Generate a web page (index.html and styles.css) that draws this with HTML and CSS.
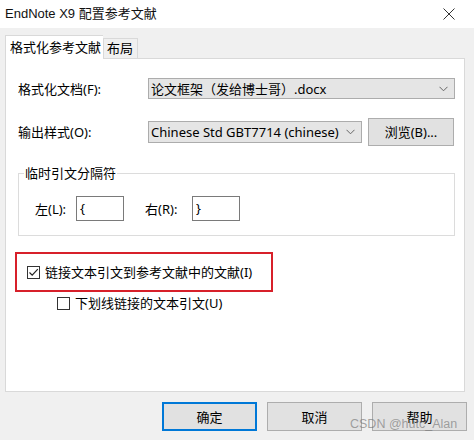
FILE: index.html
```html
<!DOCTYPE html>
<html lang="zh-CN">
<head>
<meta charset="utf-8">
<title>EndNote X9 配置参考文献</title>
<link rel="stylesheet" href="styles.css">
</head>
<body>
<div class="window">
  <div class="titlebar">
    <span class="title">EndNote X9 配置参考文献</span>
    <svg class="close" width="12" height="12" viewBox="0 0 12 12"><path d="M0.5 0.5 L11.5 11.5 M11.5 0.5 L0.5 11.5" stroke="#333" stroke-width="1" fill="none"/></svg>
  </div>
  <div class="tabs">
    <div class="tab active">格式化参考文献</div>
    <div class="tab">布局</div>
  </div>
  <div class="panel">
    <div class="row row1">
      <span class="label">格式化文档(F):</span>
      <div class="select wide">
        <span class="sel-text">论文框架（发给博士哥）.docx</span>
        <svg class="chev" width="9" height="6" viewBox="0 0 9 6"><path d="M0.5 0.8 L4.5 4.8 L8.5 0.8" stroke="#666" stroke-width="1" fill="none"/></svg>
      </div>
    </div>
    <div class="row row2">
      <span class="label">输出样式(O):</span>
      <div class="select narrow">
        <span class="sel-text">Chinese Std GBT7714 (chinese)</span>
        <svg class="chev" width="9" height="6" viewBox="0 0 9 6"><path d="M0.5 0.8 L4.5 4.8 L8.5 0.8" stroke="#666" stroke-width="1" fill="none"/></svg>
      </div>
      <div class="btn browse">浏览(B)...</div>
    </div>
    <fieldset class="group">
      <legend>临时引文分隔符</legend>
      <div class="sep-row">
        <span class="sep-label l">左(L):</span>
        <div class="field">{</div>
        <span class="sep-label r">右(R):</span>
        <div class="field">}</div>
      </div>
    </fieldset>
    <div class="highlight">
      <div class="check">
        <span class="box"><svg width="11" height="11" viewBox="0 0 11 11"><path d="M1.5 5.5 L4.2 8.2 L9.8 2.2" stroke="#222" stroke-width="1.2" fill="none"/></svg></span>
        <span>链接文本引文到参考文献中的文献(I)</span>
      </div>
    </div>
    <div class="check sub">
      <span class="box"></span>
      <span>下划线链接的文本引文(U)</span>
    </div>
  </div>
  <div class="footer">
    <div class="btn action default">确定</div>
    <div class="btn action">取消</div>
    <div class="btn action">帮助</div>
  </div>
  <div class="watermark">CSDN @hutc_Alan</div>
</div>
</body>
</html>
```

FILE: styles.css
```css
* { box-sizing: border-box; }
html, body { margin: 0; padding: 0; }
body {
  width: 474px;
  height: 440px;
  background: #f0f0f0;
  font-family: "Noto Sans", "Noto Sans CJK SC", sans-serif;
  font-size: 13px;
  color: #000;
  overflow: hidden;
}
.window { position: relative; width: 474px; height: 440px; }
.titlebar {
  height: 28px;
  background: #fff;
  display: flex;
  align-items: center;
  justify-content: space-between;
  padding: 0 19px 0 5px;
}
.title {
  font-family: "Liberation Sans", "Noto Sans CJK SC", sans-serif;
  font-size: 13px;
  line-height: 18px;
  color: #111;
  white-space: nowrap;
}
.close { display: block; }
.tabs {
  margin-top: 7px;
  padding-left: 5px;
  height: 23px;
  display: flex;
  align-items: flex-end;
}
.tab {
  height: 20px;
  padding: 0 4px 0 3px;
  border: 1px solid #d9d9d9;
  border-bottom: none;
  background: #f0f0f0;
  line-height: 19px;
  font-size: 13px;
  white-space: nowrap;
}
.tab.active {
  position: relative;
  z-index: 1;
  height: 24px;
  margin-bottom: -1px;
  width: 98px;
  padding: 0 0 0 4px;
  background: #fff;
  border-right: none;
  line-height: 22px;
}
.panel {
  margin: 0 9px 0 5px;
  height: 334px;
  background: #fff;
  border: 1px solid #d9d9d9;
  padding: 0 8px 0 12px;
}
.row { display: flex; align-items: center; }
.row1 { margin-top: 19px; height: 21px; }
.row2 { margin-top: 19px; height: 28px; }
.label { width: 130px; line-height: 18px; white-space: nowrap; }
.select {
  height: 22px;
  background: #e5e5e5;
  border: 1px solid #acacac;
  display: flex;
  align-items: center;
  justify-content: space-between;
  padding: 0 6px 0 2px;
  line-height: 18px;
  white-space: nowrap;
}
.row1 .select { height: 21px; }
.select.wide { width: 307px; }
.select.narrow { width: 214px; }
.chev { display: block; }
.btn {
  background: #e1e1e1;
  border: 1px solid #adadad;
  display: flex;
  align-items: center;
  justify-content: center;
  line-height: 18px;
  white-space: nowrap;
}
.browse { width: 86px; height: 28px; margin-left: 6px; }
.group {
  margin: 18px 0 0 0;
  width: 437px;
  border: 1px solid #dcdcdc;
  padding: 0 0 14px 5px;
  min-width: 0;
}
.group legend {
  padding: 0 1px;
  line-height: 18px;
  font-size: 13px;
}
.sep-row { display: flex; align-items: center; padding-top: 14px; padding-left: 11px; }
.sep-label { line-height: 18px; white-space: nowrap; }
.sep-label.l { width: 41px; }
.sep-label.r { width: 47px; margin-left: 21px; }
.field {
  width: 48px;
  height: 25px;
  border: 1px solid #7a7a7a;
  background: #fff;
  line-height: 22px;
  padding-left: 3px;
}
.highlight {
  margin: 16px 0 0 -3px;
  width: 258px;
  height: 40px;
  border: 2px solid #d7202a;
  display: flex;
  align-items: center;
  padding-left: 10px;
}
.check { display: flex; align-items: center; line-height: 18px; white-space: nowrap; }
.box {
  width: 13px;
  height: 13px;
  border: 1px solid #333;
  background: #fff;
  margin-right: 5px;
  display: flex;
  align-items: center;
  justify-content: center;
  flex: none;
}
.box svg { display: block; }
.check.sub { margin: 3px 0 0 39px; height: 16px; }
.footer {
  display: flex;
  justify-content: flex-end;
  gap: 10px;
  padding: 10px 7px 0 0;
}
.action { width: 95px; height: 29px; }
.action.default { border: 2px solid #0078d7; }
.watermark {
  position: absolute;
  left: 350px;
  top: 417px;
  font-family: "Liberation Sans", sans-serif;
  font-size: 12.5px;
  line-height: 15px;
  color: rgba(110, 110, 110, 0.6);
  white-space: nowrap;
}
```
